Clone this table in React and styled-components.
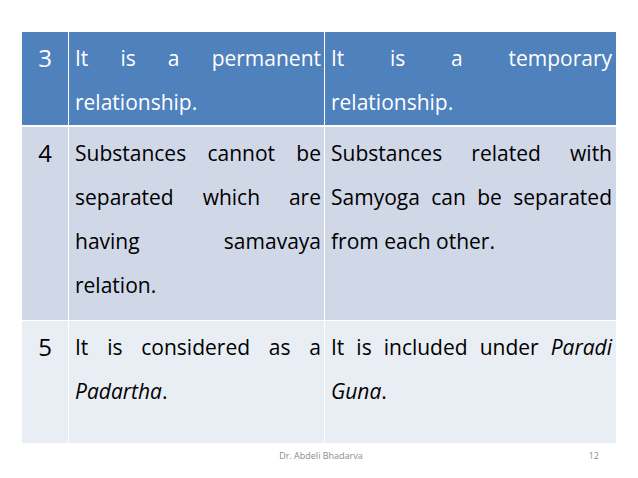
import React from 'react';
import styled, { createGlobalStyle } from 'styled-components';

const GlobalStyle = createGlobalStyle`
  html, body {
    margin: 0;
    padding: 0;
    background: #ffffff;
  }
  body {
    font-family: "Open Sans", "Noto Sans", sans-serif;
  }
`;

const Slide = styled.div`
  width: 638px;
  height: 478px;
  box-sizing: border-box;
  padding: 32px 22px 0 22px;
  display: flex;
  flex-direction: column;
`;

const Table = styled.div`
  display: flex;
  flex-direction: column;
  background: #ffffff;
`;

const Row = styled.div`
  display: grid;
  grid-template-columns: 46px 255px 1fr;
  column-gap: 1px;
  height: ${p => p.$height}px;
  margin-top: ${p => p.$gap || 0}px;
`;

const tones = {
  head: { bg: '#4f81bd', fg: '#ffffff' },
  dark: { bg: '#d0d8e8', fg: '#000000' },
  light: { bg: '#e9edf4', fg: '#000000' },
};

const Cell = styled.div`
  background: ${p => tones[p.$tone].bg};
  color: ${p => tones[p.$tone].fg};
  box-sizing: border-box;
  padding: 4px ${p => p.$right || 4}px 0 ${p => p.$left || 6}px;
  font-size: 21px;
  line-height: 44px;
`;

const Num = styled(Cell)`
  text-align: center;
  font-size: 24px;
  padding: 4px 0 0 0;
`;

const Line = styled.div`
  text-align: justify;
  text-align-last: ${p => (p.$last ? 'left' : 'justify')};
`;

const Footer = styled.div`
  display: grid;
  grid-template-columns: 1fr auto 1fr;
  align-items: center;
  margin-top: 6px;
  font-size: 9px;
  color: #8c8c8c;
`;

const Author = styled.div`
  grid-column: 2;
  margin-left: 4px;
`;

const PageNo = styled.div`
  grid-column: 3;
  justify-self: end;
  padding-right: 17px;
`;

const rows = [
  {
    n: '3',
    tone: 'head',
    height: 93,
    gap: 0,
    a: [['It is a permanent'], ['relationship.']],
    b: [['It is a temporary'], ['relationship.']],
  },
  {
    n: '4',
    tone: 'dark',
    height: 193,
    gap: 2,
    a: [['Substances cannot be'], ['separated which are'], ['having samavaya'], ['relation.']],
    b: [['Substances related with'], ['Samyoga can be separated'], ['from each other.']],
  },
  {
    n: '5',
    tone: 'light',
    height: 122,
    gap: 1,
    a: [['It is considered as a'], [<i key="p">Padartha</i>, '.']],
    b: [['It is included under ', <i key="g">Paradi</i>], [<i key="g2">Guna</i>, '.']],
  },
];

function Lines({ lines }) {
  return lines.map((parts, i) => (
    <Line key={i} $last={i === lines.length - 1}>
      {parts}
    </Line>
  ));
}

export default function App() {
  return (
    <>
      <GlobalStyle />
      <Slide>
        <Table>
          {rows.map(r => (
            <Row key={r.n} $height={r.height} $gap={r.gap}>
              <Num $tone={r.tone}>{r.n}</Num>
              <Cell $tone={r.tone} $left={6} $right={3}>
                <Lines lines={r.a} />
              </Cell>
              <Cell $tone={r.tone} $left={6} $right={4}>
                <Lines lines={r.b} />
              </Cell>
            </Row>
          ))}
        </Table>
        <Footer>
          <Author>Dr. Abdeli Bhadarva</Author>
          <PageNo>12</PageNo>
        </Footer>
      </Slide>
    </>
  );
}
